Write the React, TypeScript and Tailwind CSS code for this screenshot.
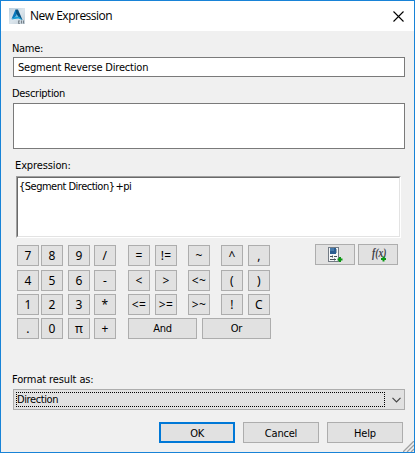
import type { ReactNode } from 'react'
import clsx from 'clsx'

const KEY_ROWS = [
  ['7', '8', '9', '/', '=', '!=', '~', '^', ','],
  ['4', '5', '6', '-', '<', '>', '<~', '(', ')'],
  ['1', '2', '3', '*', '<=', '>=', '>~', '!', 'C'],
]

const LAST_ROW = ['.', '0', 'π', '+']

// Gap in front of each key column
const KEY_GAPS = ['', 'ml-[2px]', 'ml-[5px]', 'ml-[4px]', 'ml-[12px]', 'ml-[5px]', 'ml-[11px]', 'ml-[11px]', 'ml-[5px]']

function PushButton({ children, className }: { children: ReactNode; className?: string }) {
  return (
    <button
      type="button"
      className={clsx(
        'flex h-[21px] shrink-0 items-center justify-center bg-[#e1e1e1] leading-none whitespace-nowrap',
        className,
      )}
    >
      {children}
    </button>
  )
}

function Key({ label, gap }: { label: string; gap: string }) {
  return (
    <PushButton
      className={clsx(
        "w-[22px] border border-[#adadad] font-['Noto_Sans',sans-serif] text-[12px] tracking-[0.3px] [font-stretch:normal]",
        gap,
      )}
    >
      {label}
    </PushButton>
  )
}

function AppIcon() {
  return (
    <svg width="16" height="17" viewBox="0 0 16 17">
      <defs>
        <linearGradient id="tile" x1="0" y1="0" x2="1" y2="1">
          <stop offset="0" stopColor="#b9cfdf" />
          <stop offset="0.5" stopColor="#dce6ed" />
          <stop offset="1" stopColor="#c0ccd5" />
        </linearGradient>
      </defs>
      <rect width="16" height="16" fill="url(#tile)" />
      <path d="M6.5 1.5 2.5 11l3.5-1.5L9 4z" fill="#0a78bd" />
      <path d="M6.5 1.5H9L13.5 12 9.5 9.8 7.5 6z" fill="#075282" />
      <path d="M2.5 11.5 6 8.8l4-.3 3.5 3.5-4.3-1.6z" fill="#1aa0d8" />
      <path d="m7.6 6.5 1.2 2-2.2.2z" fill="#4cb5df" />
      <path d="M9 12.5h2v1H9.8v1.2H11v1H9zM12 12.5h1v3h-1zM14 12.5h1v3h-1z" fill="#77828a" />
    </svg>
  )
}

function PropertyIcon() {
  return (
    <svg width="16" height="16" viewBox="0 0 16 16">
      <rect x="1.5" y="0.5" width="10" height="14" fill="#f4f6f8" stroke="#737b84" />
      <rect x="3" y="1" width="6" height="6" fill="#2a5d91" />
      <path d="M3 1h4v3H3z" fill="#477aac" />
      <path d="M9.5 2v4" stroke="#9aa9b7" />
      <path d="M3 9.5h3M7 9.5h3M3 12.5h6" stroke="#47515b" />
      <path d="M5.5 8.5v2M7.5 11.5v2" stroke="#47515b" />
      <path d="M10.5 12.5h5M13 10v5" stroke="#0b9813" strokeWidth="2" />
    </svg>
  )
}

function FunctionIcon() {
  return (
    <svg className="overflow-visible" width="18" height="19" viewBox="0 0 18 19">
      <text
        x="3"
        y="11.5"
        className="font-['Liberation_Serif',serif] text-[13px] font-bold tracking-normal italic"
        fill="#3f4248"
        textLength="14.5"
        lengthAdjust="spacingAndGlyphs"
      >
        f(x)
      </text>
      <path d="M12 14h5M14.5 11.5v5" stroke="#0b9813" strokeWidth="2" />
    </svg>
  )
}

export default function App() {
  return (
    <div className="relative flex h-[453px] w-[415px] flex-col overflow-hidden border border-[#1883d7] bg-[#f0f0f0] font-['DejaVu_Sans_Condensed','DejaVu_Sans',sans-serif] text-[11px] leading-[14px] font-normal tracking-[-0.2px] text-black [font-stretch:condensed]">
      {/* Title bar */}
      <header className="flex h-[30px] shrink-0 items-center bg-white pr-[10px] pl-2">
        <AppIcon />
        <h1 className="ml-[5px] flex-1 font-['Open_Sans',sans-serif] text-[12px] tracking-[-0.5px] [font-stretch:normal]">
          New Expression
        </h1>
        <svg width="11" height="11" viewBox="0 0 11 11" stroke="#000" strokeWidth="1.1">
          <path d="m.5.5 10 10m0-10-10 10" />
        </svg>
      </header>

      <main className="flex flex-col pl-3">
        <label className="mt-[10px] -ml-px h-4 leading-4 tracking-[-0.3px]">Name:</label>
        <div className="flex h-5 w-[392px] items-center border border-[#7a7a7a] bg-white pt-px pl-1">
          Segment Reverse Direction
        </div>

        <label className="mt-[9px] -ml-px h-[17px] leading-4 tracking-[-0.3px]">Description</label>
        <div className="h-[46px] w-[392px] border border-[#7a7a7a] bg-white" />

        <label className="mt-[9px] ml-[2px] h-[18px] leading-4 tracking-[-0.12px]">Expression:</label>
        <div className="ml-[3px] h-[62px] w-[385px] border border-t-[#a0a0a0] border-r-white border-b-white border-l-[#a0a0a0]">
          <div className="h-full border border-t-[#696969] border-r-[#e3e3e3] border-b-[#e3e3e3] border-l-[#696969] bg-white pl-px leading-[17px] tracking-[-0.5px]">
            {'{Segment Direction}'}
            <span className="ml-[1px]">+pi</span>
          </div>
        </div>

        {/* Keypad and insert buttons */}
        <div className="mt-[6px] ml-1 flex">
          <div className="mt-px w-[298px]">
            {KEY_ROWS.map((row, r) => (
              <div key={row[0]} className={clsx('flex', r === 0 ? 'mb-1' : 'mb-[3px]')}>
                {row.map((label, i) => (
                  <Key key={label} label={label} gap={KEY_GAPS[i]} />
                ))}
              </div>
            ))}
            <div className="flex">
              {LAST_ROW.map((label, i) => (
                <Key key={label} label={label} gap={KEY_GAPS[i]} />
              ))}
              <PushButton className="ml-3 w-[69px] border border-[#adadad]">And</PushButton>
              <PushButton className="ml-[5px] w-[69px] border border-[#adadad]">Or</PushButton>
            </div>
          </div>
          <PushButton className="w-10 border border-[#adadad]">
            <PropertyIcon />
          </PushButton>
          <PushButton className="ml-[3px] w-10 border border-[#adadad]">
            <FunctionIcon />
          </PushButton>
        </div>

        <label className="mt-[33px] -ml-px h-[17px] leading-[15px] tracking-[-0.12px]">Format result as:</label>
        <div className="flex h-[21px] w-[392px] items-center border border-[#adadad] bg-[#e1e1e1] pl-[2px]">
          <div className="flex h-[15px] w-[369px] items-center border border-dotted border-black pt-px tracking-[-0.4px]">
            Direction
          </div>
          <svg className="ml-[7px]" width="9" height="6" viewBox="0 0 9 6" fill="none" stroke="#444" strokeWidth="1.2">
            <path d="m.5.8 4 4 4-4" />
          </svg>
        </div>
      </main>

      <footer className="mt-3 flex gap-2 pl-[158px]">
        <PushButton className="w-[76px] border-2 border-[#0078d7] pt-px tracking-[-0.4px]">OK</PushButton>
        <PushButton className="w-[76px] border border-[#adadad] pt-px">Cancel</PushButton>
        <PushButton className="w-[76px] border border-[#adadad] pt-px">Help</PushButton>
      </footer>

      {/* Resize grip */}
      <svg className="absolute right-0 bottom-0" width="11" height="11" viewBox="0 0 11 11" stroke="#a0a0a0" strokeWidth="1.3">
        <path d="M0 11 11 0M4 11l7-7M8 11l3-3" />
      </svg>
    </div>
  )
}
